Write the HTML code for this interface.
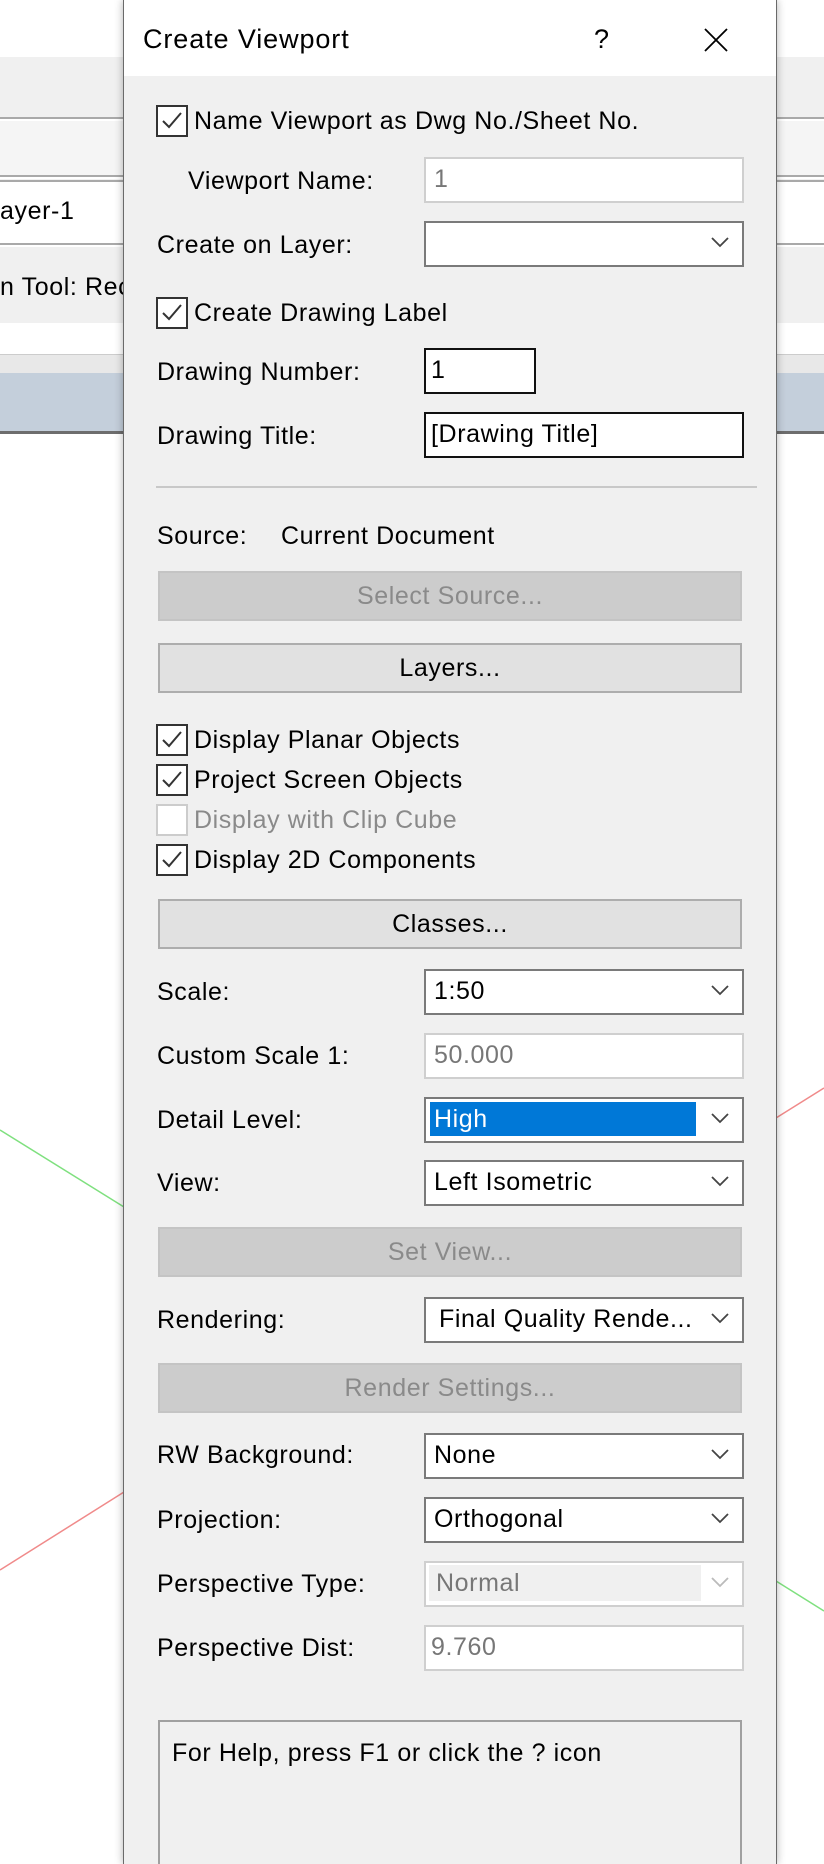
<!DOCTYPE html>
<html style="overflow:hidden;height:1864px"><head><meta charset="utf-8"><style>
*{margin:0;padding:0;box-sizing:border-box}
body{width:824px;height:1864px;position:relative;overflow:hidden;background:#fff;font-family:"Liberation Sans",sans-serif;font-size:25px;letter-spacing:0.6px;color:#000}
.a{position:absolute}
.lbl{position:absolute;left:157px;line-height:30px;white-space:nowrap}
.inp{position:absolute;left:424px;width:320px;height:46px;background:#fff;border:2px solid #7a7a7a;line-height:40px;padding-left:8px;white-space:nowrap}
.dis{border-color:#cfcfcf;color:#777}
.chev{position:absolute;right:12px;top:13px;width:20px;height:12px}
.btn{position:absolute;left:158px;width:584px;height:50px;background:#e1e1e1;border:2px solid #adadad;text-align:center;line-height:46px}
.btn.d{background:#cccccc;border-color:#c4c4c4;color:#8a8a8a}
.cb{position:absolute;left:156px;width:32px;height:32px;border:2px solid #333;background:#fff}
.cb svg{position:absolute;left:4px;top:5px}
.cbt{position:absolute;left:194px;line-height:32px;white-space:nowrap}
</style></head><body>
<div class="a" style="left:0;top:57px;width:824px;height:62px;background:#f0f0f0;border-bottom:2px solid #a9a9a9"></div>
<div class="a" style="left:0;top:121px;width:824px;height:56px;background:#f5f5f5;border-bottom:2px solid #a9a9a9"></div>
<div class="a" style="left:0;top:179px;width:824px;height:3px;background:#f0f0f0;border-bottom:2px solid #a9a9a9"></div>
<div class="a" style="left:0;top:184px;width:824px;height:61px;background:#fff;border-bottom:2px solid #a9a9a9"></div>
<div class="a" style="left:0;top:196px;line-height:30px">ayer-1</div>
<div class="a" style="left:0;top:247px;width:824px;height:76px;background:#f0f0f0"></div>
<div class="a" style="left:0;top:272px;line-height:30px">n Tool: Rec</div>
<div class="a" style="left:0;top:323px;width:824px;height:32px;background:#fff;border-bottom:1px solid #ccc"></div>
<div class="a" style="left:0;top:355px;width:824px;height:18px;background:#e8e8e8"></div>
<div class="a" style="left:0;top:373px;width:824px;height:61px;background:#c4cfdb;border-bottom:3px solid #6d6d6d"></div>
<svg class="a" style="left:0;top:0" width="824" height="1864">
<line x1="0" y1="1130" x2="124" y2="1207" stroke="#7fe07f" stroke-width="1.5"/>
<line x1="0" y1="1570" x2="124" y2="1492" stroke="#f08a8a" stroke-width="1.5"/>
<line x1="776" y1="1118" x2="824" y2="1088" stroke="#f08a8a" stroke-width="1.5"/>
<line x1="776" y1="1581" x2="824" y2="1611" stroke="#7fe07f" stroke-width="1.5"/>
</svg>
<div class="a" style="left:123px;top:0;width:654px;height:1864px;background:#f0f0f0;border:1px solid #6a6a6a;border-bottom:none;box-shadow:0 0 8px rgba(0,0,0,.3)"></div>
<div class="a" style="left:124px;top:0;width:652px;height:76px;background:#fff"></div>
<div class="a" style="left:143px;top:23px;font-size:27px;letter-spacing:0.9px;line-height:32px">Create Viewport</div>
<div class="a" style="left:594px;top:23px;font-size:27px;line-height:32px">?</div>
<svg class="a" style="left:704px;top:28px" width="24" height="24"><path d="M1 1L23 23M23 1L1 23" stroke="#000" stroke-width="1.8"/></svg>

<div class="cb" style="top:105px"><svg width="20" height="18"><path d="M1 9L7 15L19 1" fill="none" stroke="#333" stroke-width="2"/></svg></div>
<div class="cbt" style="top:105px">Name Viewport as Dwg No./Sheet No.</div>
<div class="lbl" style="left:188px;top:166px">Viewport Name:</div>
<div class="inp dis" style="top:157px">1</div>
<div class="lbl" style="top:230px">Create on Layer:</div>
<div class="inp" style="top:221px"><svg class="chev" viewBox="0 0 20 12"><path d="M2 2L10 10L18 2" fill="none" stroke="#444" stroke-width="1.8"/></svg></div>
<div class="cb" style="top:297px"><svg width="20" height="18"><path d="M1 9L7 15L19 1" fill="none" stroke="#333" stroke-width="2"/></svg></div>
<div class="cbt" style="top:297px">Create Drawing Label</div>
<div class="lbl" style="top:357px">Drawing Number:</div>
<div class="inp" style="top:348px;width:112px;border:2px solid #111;padding-left:5px">1</div>
<div class="lbl" style="top:421px">Drawing Title:</div>
<div class="inp" style="top:412px;border:2px solid #111;padding-left:5px">[Drawing Title]</div>
<div class="a" style="left:156px;top:486px;width:601px;height:2px;background:#c8c8c8"></div>
<div class="lbl" style="top:521px">Source:</div>
<div class="lbl" style="left:281px;top:521px">Current Document</div>
<div class="btn d" style="top:571px">Select Source...</div>
<div class="btn" style="top:643px">Layers...</div>

<div class="cb" style="top:724px"><svg width="20" height="18"><path d="M1 9L7 15L19 1" fill="none" stroke="#333" stroke-width="2"/></svg></div>
<div class="cbt" style="top:724px">Display Planar Objects</div>
<div class="cb" style="top:764px"><svg width="20" height="18"><path d="M1 9L7 15L19 1" fill="none" stroke="#333" stroke-width="2"/></svg></div>
<div class="cbt" style="top:764px">Project Screen Objects</div>
<div class="cb" style="top:804px;border-color:#ccc"></div>
<div class="cbt" style="top:804px;color:#8a8a8a">Display with Clip Cube</div>
<div class="cb" style="top:844px"><svg width="20" height="18"><path d="M1 9L7 15L19 1" fill="none" stroke="#333" stroke-width="2"/></svg></div>
<div class="cbt" style="top:844px">Display 2D Components</div>
<div class="btn" style="top:899px">Classes...</div>

<div class="lbl" style="top:977px">Scale:</div>
<div class="inp" style="top:969px">1:50<svg class="chev" viewBox="0 0 20 12"><path d="M2 2L10 10L18 2" fill="none" stroke="#444" stroke-width="1.8"/></svg></div>
<div class="lbl" style="top:1041px">Custom Scale 1:</div>
<div class="inp dis" style="top:1033px">50.000</div>
<div class="lbl" style="top:1105px">Detail Level:</div>
<div class="inp" style="top:1097px;padding-left:4px"><span style="display:inline-block;width:266px;height:34px;background:#0078d7;color:#fff;line-height:34px;padding-left:4px;vertical-align:top;margin-top:3px">High</span><svg class="chev" viewBox="0 0 20 12"><path d="M2 2L10 10L18 2" fill="none" stroke="#444" stroke-width="1.8"/></svg></div>
<div class="lbl" style="top:1168px">View:</div>
<div class="inp" style="top:1160px">Left Isometric<svg class="chev" viewBox="0 0 20 12"><path d="M2 2L10 10L18 2" fill="none" stroke="#444" stroke-width="1.8"/></svg></div>
<div class="btn d" style="top:1227px">Set View...</div>
<div class="lbl" style="top:1305px">Rendering:</div>
<div class="inp" style="top:1297px;padding-left:13px">Final Quality Rende...<svg class="chev" viewBox="0 0 20 12"><path d="M2 2L10 10L18 2" fill="none" stroke="#444" stroke-width="1.8"/></svg></div>
<div class="btn d" style="top:1363px">Render Settings...</div>
<div class="lbl" style="top:1440px">RW Background:</div>
<div class="inp" style="top:1433px">None<svg class="chev" viewBox="0 0 20 12"><path d="M2 2L10 10L18 2" fill="none" stroke="#444" stroke-width="1.8"/></svg></div>
<div class="lbl" style="top:1505px">Projection:</div>
<div class="inp" style="top:1497px">Orthogonal<svg class="chev" viewBox="0 0 20 12"><path d="M2 2L10 10L18 2" fill="none" stroke="#444" stroke-width="1.8"/></svg></div>
<div class="lbl" style="top:1569px">Perspective Type:</div>
<div class="inp dis" style="top:1561px;padding-left:3px"><span style="display:inline-block;width:272px;height:36px;background:#f0f0f0;line-height:36px;padding-left:7px;vertical-align:top;margin-top:2px">Normal</span><svg class="chev" viewBox="0 0 20 12"><path d="M2 2L10 10L18 2" fill="none" stroke="#bbb" stroke-width="1.8"/></svg></div>
<div class="lbl" style="top:1633px">Perspective Dist:</div>
<div class="inp dis" style="top:1625px;padding-left:5px">9.760</div>

<div class="a" style="left:158px;top:1720px;width:584px;height:144px;border:2px solid #a0a0a0;border-bottom:none;background:#f0f0f0"></div>
<div class="a" style="left:172px;top:1738px;line-height:30px">For Help, press F1 or click the ? icon</div>
</body></html>
